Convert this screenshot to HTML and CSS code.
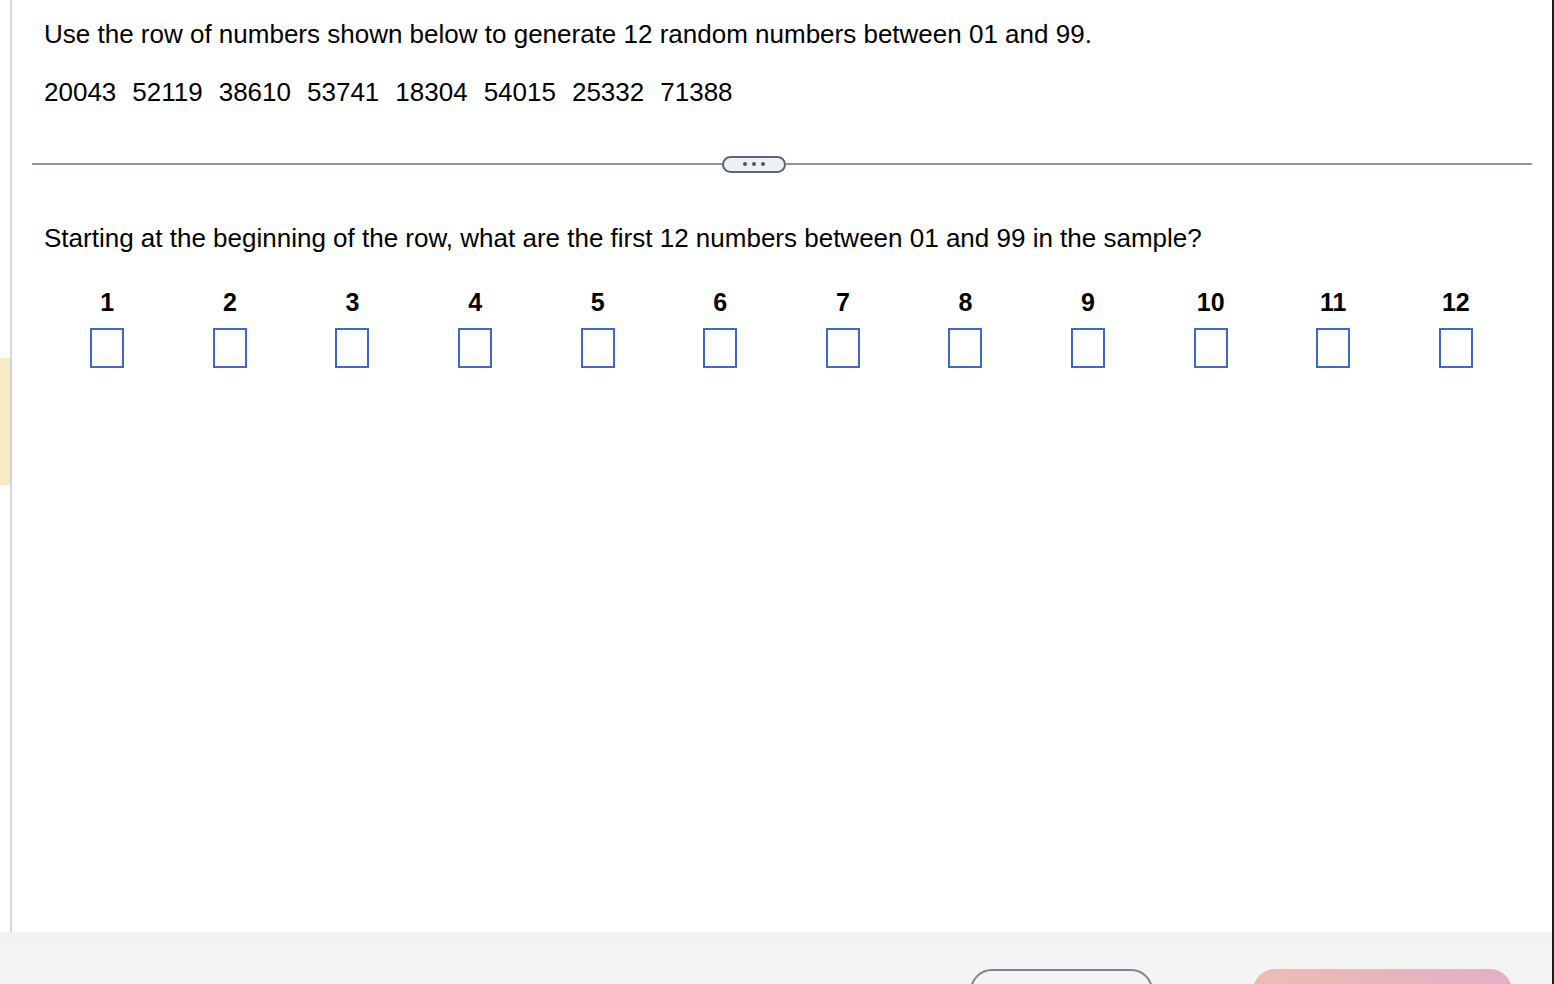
FILE: index.html
```html
<!DOCTYPE html>
<html lang="en">
<head>
<meta charset="utf-8">
<title>Random numbers</title>
<link rel="stylesheet" href="styles.css">
</head>
<body>
<div class="page">
  <div class="main">
    <div class="frame">
      <div class="gutter"><div class="marker"></div></div>
      <div class="content">
        <p class="intro">Use the row of numbers shown below to generate 12 random numbers between 01 and 99.</p>
        <div class="digits">
          <span>20043</span><span>52119</span><span>38610</span><span>53741</span><span>18304</span><span>54015</span><span>25332</span><span>71388</span>
        </div>
        <div class="divider">
          <div class="rule rule-left"></div>
          <div class="pill"><span class="dot"></span><span class="dot"></span><span class="dot"></span></div>
          <div class="rule rule-right"></div>
        </div>
        <p class="question">Starting at the beginning of the row, what are the first 12 numbers between 01 and 99 in the sample?</p>
        <div class="answers">
          <div class="cell"><div class="label">1</div><div class="box"></div></div>
          <div class="cell"><div class="label">2</div><div class="box"></div></div>
          <div class="cell"><div class="label">3</div><div class="box"></div></div>
          <div class="cell"><div class="label">4</div><div class="box"></div></div>
          <div class="cell"><div class="label">5</div><div class="box"></div></div>
          <div class="cell"><div class="label">6</div><div class="box"></div></div>
          <div class="cell"><div class="label">7</div><div class="box"></div></div>
          <div class="cell"><div class="label">8</div><div class="box"></div></div>
          <div class="cell"><div class="label">9</div><div class="box"></div></div>
          <div class="cell"><div class="label">10</div><div class="box"></div></div>
          <div class="cell"><div class="label">11</div><div class="box"></div></div>
          <div class="cell"><div class="label">12</div><div class="box"></div></div>
        </div>
      </div>
    </div>
    <div class="footer">
      <div class="btn btn-outline"></div>
      <div class="btn btn-primary"></div>
    </div>
  </div>
  <div class="edge"></div>
</div>
</body>
</html>
```

FILE: styles.css
```css
html, body {
  margin: 0;
  padding: 0;
  height: 984px;
  overflow: hidden;
  background: #ffffff;
}

body {
  font-family: "Liberation Sans", Arial, sans-serif;
  color: #000;
}

.page {
  display: flex;
  height: 984px;
}

.main {
  flex: 1;
  display: flex;
  flex-direction: column;
}

.edge {
  width: 2px;
  background: #1b1f29;
}

.frame {
  display: flex;
  height: 932px;
}

.gutter {
  width: 10px;
  display: flex;
  flex-direction: column;
}

.marker {
  margin-top: 358px;
  height: 127px;
  background: #f8ebc4;
}

.content {
  flex: 1;
  border-left: 2px solid #d2d5e1;
  padding: 0 20px;
}

.intro {
  margin: 18px 0 0 12px;
  font-size: 26px;
  line-height: 32px;
}

.digits {
  display: flex;
  gap: 16px;
  margin: 26px 0 0 12px;
  font-size: 26px;
  line-height: 32px;
}

.divider {
  display: flex;
  align-items: center;
  margin-top: 47px;
  height: 18px;
}

.rule {
  height: 2px;
  background: #8d95a4;
}

.rule-left {
  width: 690px;
}

.rule-right {
  flex: 1;
}

.pill {
  width: 60px;
  height: 13px;
  border: 2px solid #5b6677;
  border-radius: 9px;
  background: #eef0f4;
  display: flex;
  align-items: center;
  justify-content: center;
  gap: 5px;
}

.dot {
  width: 4px;
  height: 4px;
  border-radius: 50%;
  background: #4d5666;
}

.question {
  margin: 49px 0 0 12px;
  font-size: 26px;
  line-height: 32px;
}

.answers {
  display: grid;
  grid-template-columns: repeat(12, 122.6px);
  margin: 34px 0 0 14px;
}

.cell {
  display: flex;
  flex-direction: column;
  align-items: center;
}

.label {
  font-weight: bold;
  font-size: 25px;
  line-height: 28px;
}

.box {
  margin-top: 12px;
  width: 30px;
  height: 36px;
  border: 2px solid #4267c8;
}

.footer {
  flex: 1;
  display: flex;
  justify-content: flex-end;
  align-items: flex-start;
  gap: 100px;
  padding: 37px 40px 0 0;
  background: linear-gradient(#f1f1f1, #f5f5f5);
  overflow: hidden;
}

.btn {
  height: 44px;
  border-radius: 24px;
  box-sizing: border-box;
  flex: none;
}

.btn-outline {
  width: 183px;
  border: 2px solid #7d8390;
  background: #f4f4f4;
}

.btn-primary {
  width: 259px;
  background: linear-gradient(90deg, #ecbcb2, #e6adc7);
}
```
